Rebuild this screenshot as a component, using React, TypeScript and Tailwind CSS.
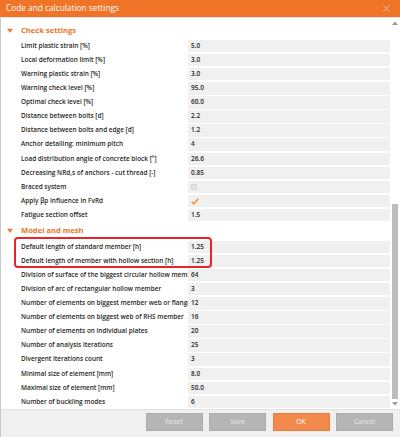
import React from "react";

type Row = { label: string; value?: string; kind?: "check" | "uncheck" };

const checkRows: Row[] = [
  { label: "Limit plastic strain [%]", value: "5.0" },
  { label: "Local deformation limit [%]", value: "3.0" },
  { label: "Warning plastic strain [%]", value: "3.0" },
  { label: "Warning check level [%]", value: "95.0" },
  { label: "Optimal check level [%]", value: "60.0" },
  { label: "Distance between bolts [d]", value: "2.2" },
  { label: "Distance between bolts and edge [d]", value: "1.2" },
  { label: "Anchor detailing: minimum pitch", value: "4" },
  { label: "Load distribution angle of concrete block [°]", value: "26.6" },
  { label: "Decreasing NRd,s of anchors - cut thread [-]", value: "0.85" },
  { label: "Braced system", kind: "uncheck" },
  { label: "Apply βp influence in FvRd", kind: "check" },
  { label: "Fatigue section offset", value: "1.5" },
];

const modelRows: Row[] = [
  { label: "Default length of standard member [h]", value: "1.25" },
  { label: "Default length of member with hollow section [h]", value: "1.25" },
  { label: "Division of surface of the biggest circular hollow member", value: "64" },
  { label: "Division of arc of rectangular hollow member", value: "3" },
  { label: "Number of elements on biggest member web or flange", value: "12" },
  { label: "Number of elements on biggest web of RHS member", value: "16" },
  { label: "Number of elements on individual plates", value: "20" },
  { label: "Number of analysis iterations", value: "25" },
  { label: "Divergent iterations count", value: "3" },
  { label: "Minimal size of element [mm]", value: "8.0" },
  { label: "Maximal size of element [mm]", value: "50.0" },
  { label: "Number of buckling modes", value: "6" },
];

function Triangle() {
  return (
    <svg width="6" height="5" viewBox="0 0 6 5" className="absolute left-[5.5px] top-1/2 -translate-y-1/2">
      <path d="M0 0 L6 0 L3 4.5 Z" fill="#f07427" />
    </svg>
  );
}

function Header({ title, h }: { title: string; h: string }) {
  return (
    <div className={`relative flex items-center pl-[20px] ${h}`}>
      <Triangle />
      <span className="text-[7.6px] font-bold text-[#f07427] leading-none">{title}</span>
    </div>
  );
}

function RowView({ row }: { row: Row }) {
  return (
    <div className="flex h-[14.1px]">
      <div className="w-[187px] shrink-0 pl-[20px] pr-[3px] flex items-center overflow-hidden whitespace-nowrap">
        <span className="text-[6.45px] font-semibold text-[#262626] leading-none">{row.label}</span>
      </div>
      <div className="flex-1 my-[0.8px] bg-[#f0f0f0] pl-[3px] flex items-center">
        {row.value !== undefined && (
          <span className="text-[6.45px] font-semibold text-[#262626] leading-none">{row.value}</span>
        )}
        {row.kind === "uncheck" && (
          <div className="w-[6px] h-[6px] bg-[#e2e2e2] border border-[#d8d8d8]" />
        )}
        {row.kind === "check" && (
          <svg width="8" height="7" viewBox="0 0 8 7">
            <path d="M0.8 3.8 L2.9 5.8 L7.2 0.8" stroke="#f4922f" strokeWidth="1.5" fill="none" />
          </svg>
        )}
      </div>
    </div>
  );
}

function Btn({ label, primary }: { label: string; primary?: boolean }) {
  return (
    <div
      className={`w-[57px] h-[18px] flex items-center justify-center text-[7px] ${
        primary
          ? "bg-[#f28a4e] text-white border border-[#ee7d3c]"
          : "bg-[#b5b5b5] text-[#e6e6e6] border border-[#acacac]"
      }`}
    >
      {label}
    </div>
  );
}

export default function App() {
  return (
    <div
      className="relative w-[400px] h-[437px] flex flex-col bg-white overflow-hidden"
      style={{ fontFamily: '"Open Sans", "Noto Sans", sans-serif' }}
    >
      <div className="h-[18px] shrink-0 bg-[#f07427] border-b border-[#dfe5ea] flex items-center justify-between pl-[6px] pr-[10px]">
        <span className="text-[8.3px] text-white leading-none">Code and calculation settings</span>
        <svg width="7" height="7" viewBox="0 0 7 7">
          <path d="M0.5 0.5 L6.5 6.5 M6.5 0.5 L0.5 6.5" stroke="#fbd7c0" strokeWidth="0.8" />
        </svg>
      </div>

      <div className="flex-1 flex min-h-0 border-l border-[#c8c8c8]">
        <div className="flex-1 flex flex-col pt-[4px]">
          <Header title="Check settings" h="h-[17px]" />
          {checkRows.map((r) => (
            <RowView key={r.label} row={r} />
          ))}
          <Header title="Model and mesh" h="h-[17.7px]" />
          {modelRows.map((r) => (
            <RowView key={r.label} row={r} />
          ))}
        </div>
        <div className="w-[10px] shrink-0 flex flex-col">
          <div className="h-[10px] flex items-center justify-center">
            <svg width="6" height="4" viewBox="0 0 6 4">
              <path d="M0 4 L3 0.5 L6 4 Z" fill="#9a9a9a" />
            </svg>
          </div>
          <div className="flex-1 flex flex-col justify-end pl-[2px] pr-[2px]">
            <div className="h-[195px] bg-[#bdbdbd]" />
          </div>
          <div className="h-[10px] flex items-center justify-center">
            <svg width="6" height="4" viewBox="0 0 6 4">
              <path d="M0 0 L6 0 L3 3.5 Z" fill="#9a9a9a" />
            </svg>
          </div>
        </div>
      </div>

      <div className="h-[28px] shrink-0 bg-[#f0f0f0] border-t border-[#e2e2e2] border-l border-l-[#c8c8c8] flex items-start justify-end gap-[6.5px] pt-[3px] pr-[7px]">
        <Btn label="Reset" />
        <Btn label="Save" />
        <Btn label="OK" primary />
        <Btn label="Cancel" />
      </div>

      <div className="absolute left-[14px] top-[237px] w-[198px] h-[31px] border-2 border-[#e3262b] rounded-[4px]" />
    </div>
  );
}
